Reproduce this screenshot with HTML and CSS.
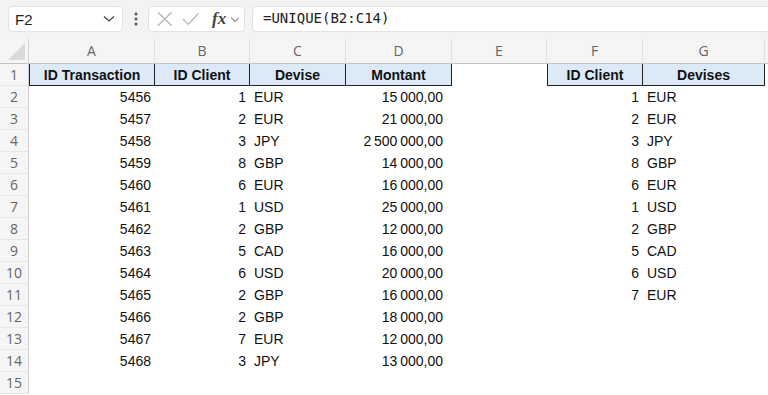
FILE: index.html
```html
<!DOCTYPE html>
<html lang="fr">
<head>
    <meta charset="UTF-8">
    <meta name="viewport" content="width=device-width, initial-scale=1.0">
    <title>Classeur - UNIQUE</title>
    <link rel="stylesheet" href="styles.css">
</head>
<body>

    <div class="toolbar">
        <div class="namebox">
            <span>F2</span>
            <svg class="chev" width="12" height="8" viewBox="0 0 12 8"><path d="M1 1.5 L6 6 L11 1.5" fill="none" stroke="#444" stroke-width="1.3"/></svg>
        </div>
        <div class="dots">
            <svg width="4" height="14" viewBox="0 0 4 14"><circle cx="2" cy="2" r="1.5" fill="#555"/><circle cx="2" cy="7" r="1.5" fill="#555"/><circle cx="2" cy="12" r="1.5" fill="#555"/></svg>
        </div>
        <div class="fxbox">
            <svg width="16" height="16" viewBox="0 0 16 16"><path d="M1 1 L15 15 M15 1 L1 15" stroke="#b8b8b8" stroke-width="1.4"/></svg>
            <svg width="18" height="14" viewBox="0 0 18 14"><path d="M1 7 L6.5 12.5 L17 1" fill="none" stroke="#b8b8b8" stroke-width="1.4"/></svg>
            <span class="fx">fx</span>
            <svg width="10" height="7" viewBox="0 0 10 7"><path d="M1 1.5 L5 5.5 L9 1.5" fill="none" stroke="#888" stroke-width="1.1"/></svg>
        </div>
        <div class="formula">=UNIQUE(B2:C14)</div>
    </div>

    <div class="sheet" id="sheet"></div>

    <script>
        const cols = ['A', 'B', 'C', 'D', 'E', 'F', 'G', 'H'];
        const clients = [1, 2, 3, 8, 6, 1, 2, 5, 6, 2, 2, 7, 3];
        const devises = ['EUR', 'EUR', 'JPY', 'GBP', 'EUR', 'USD', 'GBP', 'CAD', 'USD', 'GBP', 'GBP', 'EUR', 'JPY'];
        const montants = [15000, 21000, 2500000, 14000, 16000, 25000, 12000, 16000, 20000, 16000, 18000, 12000, 13000];
        const uniques = [[1, 'EUR'], [2, 'EUR'], [3, 'JPY'], [8, 'GBP'], [6, 'EUR'], [1, 'USD'], [2, 'GBP'], [5, 'CAD'], [6, 'USD'], [7, 'EUR']];

        function formatMontant(n) {
            // espace fine insécable pour les milliers, comme Excel en français
            return n.toString().replace(/\B(?=(\d{3})+(?!\d))/g, '\u202f') + ',00';
        }

        const sheet = document.getElementById('sheet');
        let html = '<div class="corner"><span></span></div>';
        cols.forEach(c => html += `<div class="colhead">${c === 'H' ? '' : c}</div>`);

        // ligne 1 : en-têtes
        html += '<div class="rowhead">1</div>';
        html += '<div class="hd first">ID Transaction</div><div class="hd">ID Client</div><div class="hd">Devise</div><div class="hd">Montant</div>';
        html += '<div class="cell"></div>';
        html += '<div class="hd first">ID Client</div><div class="hd">Devises</div><div class="cell"></div>';

        for (let i = 0; i < 14; i++) {
            const row = i + 2;
            html += `<div class="rowhead">${row}</div>`;
            if (i < 13) {
                html += `<div class="cell num">${5456 + i}</div>`;
                html += `<div class="cell num">${clients[i]}</div>`;
                html += `<div class="cell">${devises[i]}</div>`;
                html += `<div class="cell num money">${formatMontant(montants[i])}</div>`;
            } else {
                html += '<div class="cell"></div><div class="cell"></div><div class="cell"></div><div class="cell"></div>';
            }
            html += '<div class="cell"></div>';
            if (uniques[i]) {
                html += `<div class="cell num">${uniques[i][0]}</div><div class="cell">${uniques[i][1]}</div>`;
            } else {
                html += '<div class="cell"></div><div class="cell"></div>';
            }
            html += '<div class="cell"></div>';
        }
        sheet.innerHTML = html;
    </script>

</body>
</html>
```

FILE: styles.css
```css
* {
    margin: 0;
    padding: 0;
    box-sizing: border-box;
}

body {
    font-family: 'Liberation Sans', Arial, sans-serif;
    background: #ffffff;
    color: #111;
    overflow: hidden;
}

.toolbar {
    display: flex;
    align-items: flex-start;
    height: 39px;
    padding: 6px 0 0 8px;
    background: #f3f3f3;
}

.namebox {
    display: flex;
    align-items: center;
    justify-content: space-between;
    width: 115px;
    height: 26px;
    padding: 0 7px 0 6px;
    background: #fff;
    border: 1px solid #e3e3e3;
    border-radius: 4px;
    font-size: 15px;
    color: #222;
}

.dots {
    display: flex;
    align-items: center;
    height: 26px;
    width: 25px;
    padding-left: 11px;
}

.fxbox {
    display: flex;
    align-items: center;
    gap: 9px;
    width: 97px;
    height: 26px;
    padding: 0 4px 0 8px;
    background: #fff;
    border: 1px solid #e3e3e3;
    border-radius: 4px;
}

.fxbox .fx {
    font-family: 'Liberation Serif', 'Times New Roman', serif;
    font-style: italic;
    font-weight: bold;
    font-size: 17px;
    color: #444;
    margin-left: 4px;
    margin-right: -5px;
}

.formula {
    flex: 1;
    height: 26px;
    margin-left: 7px;
    padding: 3px 0 0 10px;
    background: #fff;
    border: 1px solid #e3e3e3;
    border-right: none;
    border-radius: 4px 0 0 4px;
    font-family: 'DejaVu Sans Mono', 'Liberation Mono', monospace;
    font-size: 14px;
    color: #222;
}

.sheet {
    display: grid;
    grid-template-columns: 29px 126px 95px 96px 106px 95px 96px 122px 1fr;
    grid-template-rows: 25px repeat(15, 22px);
    font-size: 14px;
}

.corner {
    position: relative;
    background: #f5f5f5;
    border-right: 1px solid #d4d4d4;
    border-bottom: 1px solid #c4c4c4;
}

.corner span {
    position: absolute;
    right: 3px;
    bottom: 3px;
    width: 0;
    height: 0;
    border-left: 17px solid transparent;
    border-bottom: 17px solid #dadada;
}

.colhead {
    background: #f5f5f5;
    border-right: 1px solid #e1e1e1;
    border-bottom: 1px solid #c4c4c4;
    font-family: 'Open Sans', 'Noto Sans', sans-serif;
    font-size: 14px;
    color: #666;
    text-align: center;
    line-height: 24px;
}

.rowhead {
    background: #f5f5f5;
    border-right: 1px solid #cfcfcf;
    border-bottom: 1px solid #e6e6e6;
    font-family: 'Open Sans', 'Noto Sans', sans-serif;
    font-size: 14px;
    color: #666;
    text-align: center;
    line-height: 21px;
}

.cell {
    padding: 0 4px;
    line-height: 23px;
    white-space: nowrap;
    overflow: hidden;
}

.num {
    text-align: right;
}

.money {
    padding-right: 9px;
}

.hd {
    background: #dce9f7;
    border-right: 1px solid #222;
    border-bottom: 1px solid #222;
    font-weight: bold;
    text-align: center;
    line-height: 22px;
}

.hd.first {
    border-left: 1px solid #222;
}
```
